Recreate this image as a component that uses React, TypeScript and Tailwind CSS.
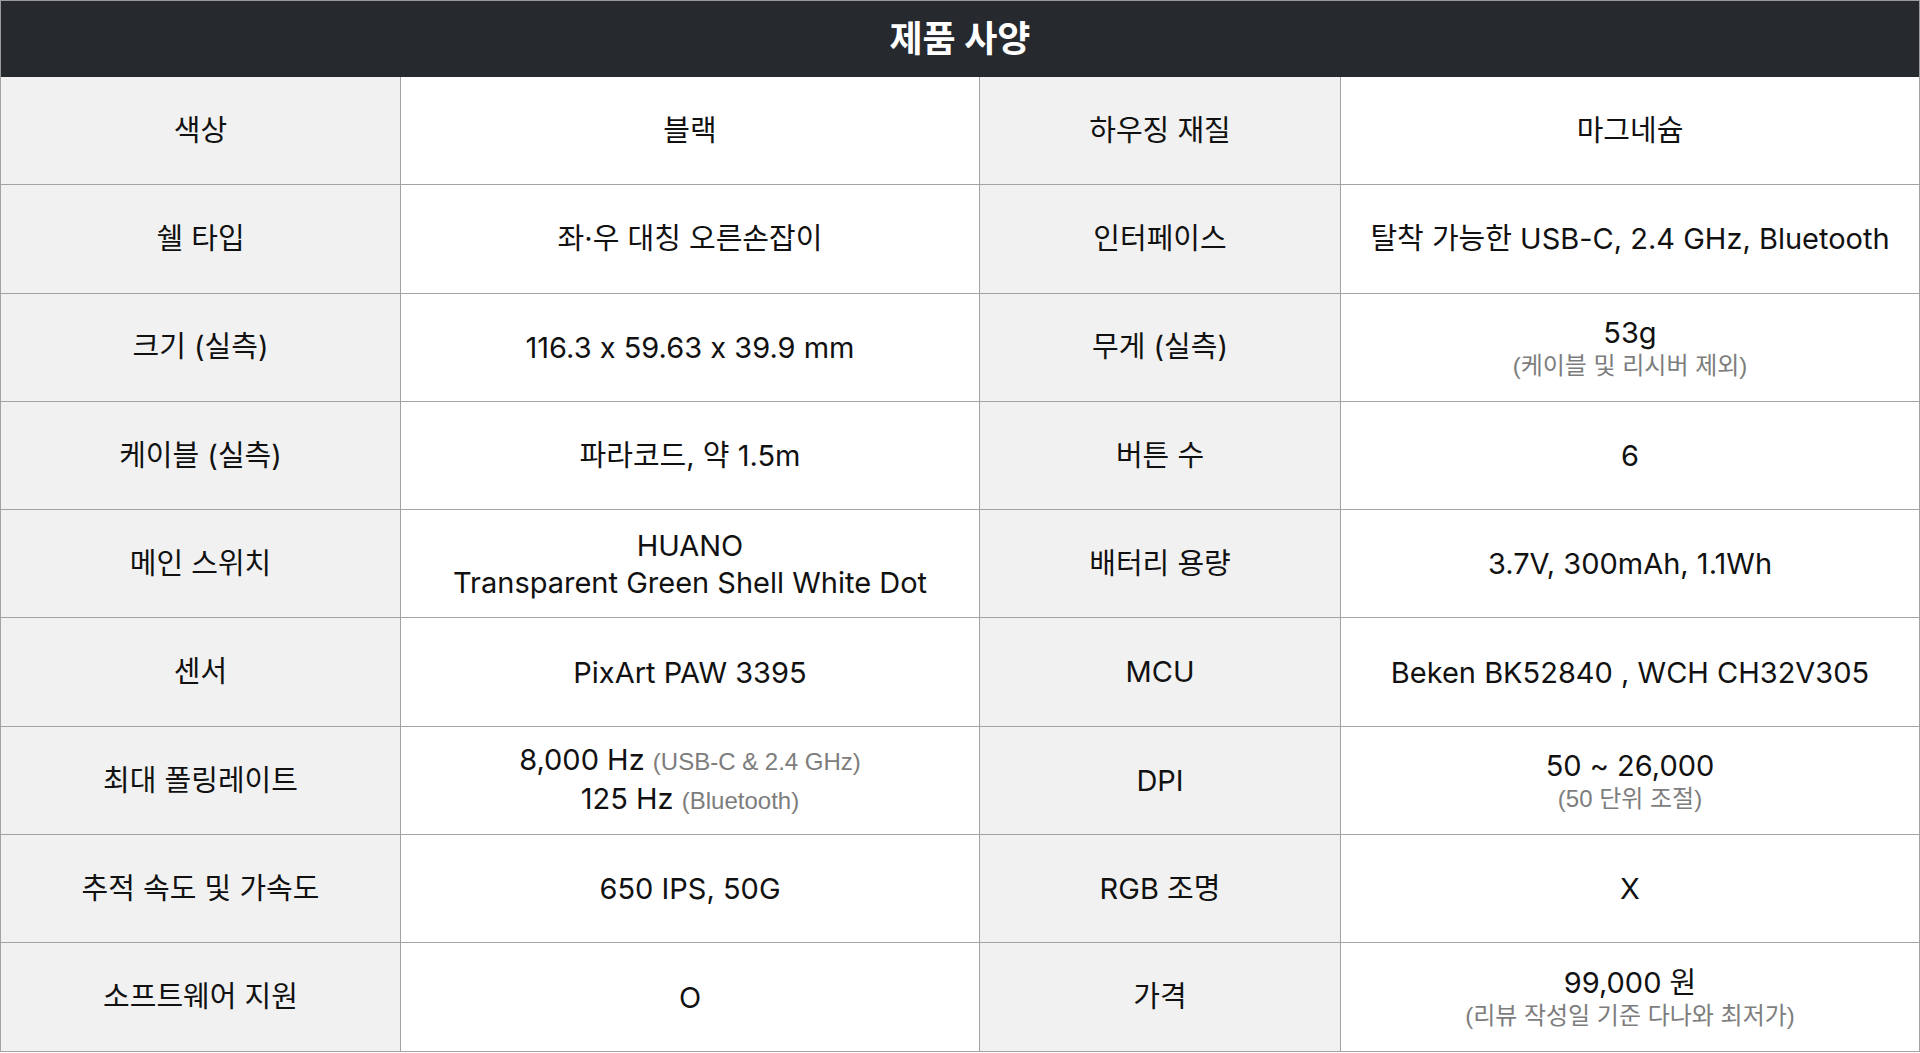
import React from "react";

type Cell = { main: React.ReactNode; sub?: string };
type Row = [string, Cell, string, Cell];

const Sub = ({ children }: { children: React.ReactNode }) => (
  <span className="text-[24px] text-[#7d7d7d] font-['Liberation_Sans','Noto_Sans_CJK_KR',sans-serif]">{children}</span>
);

const rows: Row[] = [
  ["색상", { main: "블랙" }, "하우징 재질", { main: "마그네슘" }],
  ["쉘 타입", { main: "좌·우 대칭 오른손잡이" }, "인터페이스", { main: "탈착 가능한 USB-C, 2.4 GHz, Bluetooth" }],
  ["크기 (실측)", { main: "116.3 x 59.63 x 39.9 mm" }, "무게 (실측)", { main: "53g", sub: "(케이블 및 리시버 제외)" }],
  ["케이블 (실측)", { main: "파라코드, 약 1.5m" }, "버튼 수", { main: "6" }],
  [
    "메인 스위치",
    {
      main: (
        <>
          HUANO
          <br />
          Transparent Green Shell White Dot
        </>
      ),
    },
    "배터리 용량",
    { main: "3.7V, 300mAh, 1.1Wh" },
  ],
  ["센서", { main: "PixArt PAW 3395" }, "MCU", { main: "Beken BK52840 , WCH CH32V305" }],
  [
    "최대 폴링레이트",
    {
      main: (
        <>
          8,000 Hz <Sub>(USB-C &amp; 2.4 GHz)</Sub>
          <br />
          125 Hz <Sub>(Bluetooth)</Sub>
        </>
      ),
    },
    "DPI",
    { main: "50 ~ 26,000", sub: "(50 단위 조절)" },
  ],
  ["추적 속도 및 가속도", { main: "650 IPS, 50G" }, "RGB 조명", { main: "X" }],
  ["소프트웨어 지원", { main: "O" }, "가격", { main: "99,000 원", sub: "(리뷰 작성일 기준 다나와 최저가)" }],
];

function Label({ text, first }: { text: string; first?: boolean }) {
  return (
    <div
      className={
        "flex items-center justify-center bg-[#f1f1f1] border-b border-r border-[#a3a3a3] " +
        (first ? "border-l" : "")
      }
    >
      {text}
    </div>
  );
}

function Value({ cell }: { cell: Cell }) {
  return (
    <div className="flex flex-col items-center justify-center bg-white border-b border-r border-[#a3a3a3] text-center leading-[37px]">
      <div className={cell.sub ? "leading-[34px] pt-[2px]" : ""}>{cell.main}</div>
      {cell.sub && <div className="leading-[28px]"><Sub>{cell.sub}</Sub></div>}
    </div>
  );
}

export default function App() {
  return (
    <div className="w-[1920px] h-[1053px] bg-white font-['Inter','Noto_Sans_CJK_KR',sans-serif] [font-feature-settings:'calt'_0] text-[29px] text-[#111]">
      <div className="h-[77px] bg-[#262a2f] border border-[#9a9a9a] border-b-0 flex items-center justify-center text-white text-[36px] font-bold">
        제품 사양
      </div>
      <div className="grid grid-cols-[401px_579px_361px_1fr] auto-rows-[108.3px]">
        {rows.map((r, i) => (
          <React.Fragment key={i}>
            <Label text={r[0]} first />
            <Value cell={r[1]} />
            <Label text={r[2]} />
            <Value cell={r[3]} />
          </React.Fragment>
        ))}
      </div>
    </div>
  );
}
